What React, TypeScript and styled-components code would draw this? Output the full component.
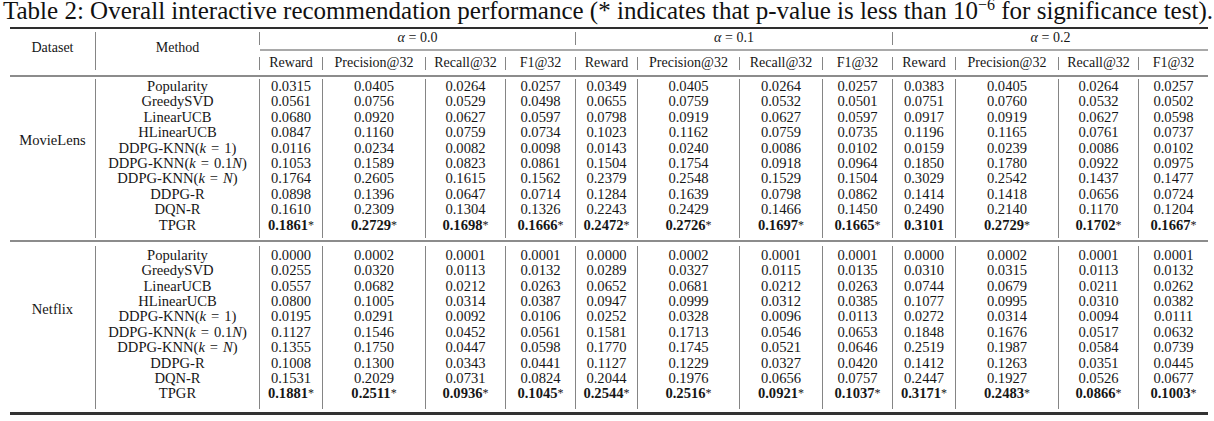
import React from "react";
import styled, { createGlobalStyle } from "styled-components";

const COLUMNS =
  "85px 164px 63px 103px 80px 70px 62px 102px 83px 70px 63px 103px 80px 70px";
const LINE = "#858585";
const ROW = 15.4;

const GlobalStyle = createGlobalStyle`
  body {
    margin: 0;
    background: #ffffff;
    color: #161616;
    font-family: "Liberation Serif", "Times New Roman", serif;
  }
`;

const Page = styled.div`
  width: 1214px;
  height: 421px;
  overflow: hidden;
`;

const Caption = styled.div`
  height: 21px;
  line-height: 21px;
  padding-left: 3px;
  font-size: 25px;
  white-space: nowrap;
  color: #111;
`;

const Sup = styled.sup`
  font-size: 16px;
  line-height: 0;
  vertical-align: 9px;
`;

const Table = styled.div`
  width: 1198px;
  margin: 6px 0 0 10px;
  font-size: 14px;
`;

const Rule = styled.div<{ $weight: number; $color: string; $gap: string }>`
  height: ${(p) => p.$weight}px;
  margin: ${(p) => p.$gap};
  background: ${(p) => p.$color};
`;

const Head = styled.div`
  display: grid;
  grid-template-columns: ${COLUMNS};
  grid-template-rows: 19px 3px 23px;
`;

const SpanHead = styled.div<{ $divider?: boolean }>`
  grid-row: 1 / 4;
  display: flex;
  align-items: center;
  justify-content: center;
  margin: 3px 0 4px;
  padding-bottom: 6px;
  border-left: ${(p) => (p.$divider ? `1px solid ${LINE}` : "none")};
`;

const GroupHead = styled.div`
  grid-row: 1;
  grid-column: span 4;
  display: flex;
  align-items: center;
  justify-content: center;
  margin: 3px 0;
  padding-bottom: 1px;
  border-left: 1px solid ${LINE};
`;

const CMidRule = styled.div`
  grid-row: 2;
  grid-column: 3 / 15;
  align-self: center;
  height: 2px;
  margin-left: 1px;
  background: #a9a9a9;
`;

const MetricHead = styled.div`
  grid-row: 3;
  display: flex;
  align-items: center;
  justify-content: center;
  margin: 6px 0 4px;
  padding-bottom: 1px;
  border-left: 1px solid ${LINE};
  white-space: nowrap;
`;

const Var = styled.i`
  font-style: italic;
`;

const Eq = styled.span`
  margin: 0 5px;
`;

const Body = styled.div<{ $padTop: number; $padBottom: number; $gap: string }>`
  --pad-top: ${(p) => p.$padTop}px;
  --pad-bottom: ${(p) => p.$padBottom}px;
  display: grid;
  grid-template-columns: ${COLUMNS};
  margin: ${(p) => p.$gap};
  font-size: 14.6px;
`;

const Column = styled.div<{ $divider?: boolean }>`
  display: flex;
  flex-direction: column;
  padding: var(--pad-top) 0 var(--pad-bottom);
  border-left: ${(p) => (p.$divider ? `1px solid ${LINE}` : "none")};
`;

const DatasetColumn = styled(Column)`
  align-items: center;
  padding-top: calc(var(--pad-top) + ${ROW * 3.5}px);
`;

const Cell = styled.div<{ $bold?: boolean }>`
  height: ${ROW}px;
  line-height: ${ROW}px;
  text-align: center;
  white-space: nowrap;
  font-weight: ${(p) => (p.$bold ? 700 : 400)};
`;

const Star = styled.span`
  font-weight: 400;
  font-size: 12px;
  vertical-align: 1px;
`;

const methods: React.ReactNode[] = [
  "Popularity",
  "GreedySVD",
  "LinearUCB",
  "HLinearUCB",
  <>DDPG-KNN(<Var>k</Var><Eq>=</Eq>1)</>,
  <>DDPG-KNN(<Var>k</Var><Eq>=</Eq>0.1<Var>N</Var>)</>,
  <>DDPG-KNN(<Var>k</Var><Eq>=</Eq><Var>N</Var>)</>,
  "DDPG-R",
  "DQN-R",
  "TPGR",
];

const alphas = ["0.0", "0.1", "0.2"];
const metrics = ["Reward", "Precision@32", "Recall@32", "F1@32"];

type Dataset = {
  name: string;
  padTop: number;
  padBottom: number;
  gap: string;
  rows: string[][];
};

const datasets: Dataset[] = [
  {
    name: "MovieLens",
    padTop: 0,
    padBottom: 5.5,
    gap: "2px 0",
    rows: [
      ["0.0315", "0.0405", "0.0264", "0.0257", "0.0349", "0.0405", "0.0264", "0.0257", "0.0383", "0.0405", "0.0264", "0.0257"],
      ["0.0561", "0.0756", "0.0529", "0.0498", "0.0655", "0.0759", "0.0532", "0.0501", "0.0751", "0.0760", "0.0532", "0.0502"],
      ["0.0680", "0.0920", "0.0627", "0.0597", "0.0798", "0.0919", "0.0627", "0.0597", "0.0917", "0.0919", "0.0627", "0.0598"],
      ["0.0847", "0.1160", "0.0759", "0.0734", "0.1023", "0.1162", "0.0759", "0.0735", "0.1196", "0.1165", "0.0761", "0.0737"],
      ["0.0116", "0.0234", "0.0082", "0.0098", "0.0143", "0.0240", "0.0086", "0.0102", "0.0159", "0.0239", "0.0086", "0.0102"],
      ["0.1053", "0.1589", "0.0823", "0.0861", "0.1504", "0.1754", "0.0918", "0.0964", "0.1850", "0.1780", "0.0922", "0.0975"],
      ["0.1764", "0.2605", "0.1615", "0.1562", "0.2379", "0.2548", "0.1529", "0.1504", "0.3029", "0.2542", "0.1437", "0.1477"],
      ["0.0898", "0.1396", "0.0647", "0.0714", "0.1284", "0.1639", "0.0798", "0.0862", "0.1414", "0.1418", "0.0656", "0.0724"],
      ["0.1610", "0.2309", "0.1304", "0.1326", "0.2243", "0.2429", "0.1466", "0.1450", "0.2490", "0.2140", "0.1170", "0.1204"],
      ["0.1861*", "0.2729*", "0.1698*", "0.1666*", "0.2472*", "0.2726*", "0.1697*", "0.1665*", "0.3101", "0.2729*", "0.1702*", "0.1667*"],
    ],
  },
  {
    name: "Netflix",
    padTop: 1.5,
    padBottom: 7.5,
    gap: "4px 0 3px",
    rows: [
      ["0.0000", "0.0002", "0.0001", "0.0001", "0.0000", "0.0002", "0.0001", "0.0001", "0.0000", "0.0002", "0.0001", "0.0001"],
      ["0.0255", "0.0320", "0.0113", "0.0132", "0.0289", "0.0327", "0.0115", "0.0135", "0.0310", "0.0315", "0.0113", "0.0132"],
      ["0.0557", "0.0682", "0.0212", "0.0263", "0.0652", "0.0681", "0.0212", "0.0263", "0.0744", "0.0679", "0.0211", "0.0262"],
      ["0.0800", "0.1005", "0.0314", "0.0387", "0.0947", "0.0999", "0.0312", "0.0385", "0.1077", "0.0995", "0.0310", "0.0382"],
      ["0.0195", "0.0291", "0.0092", "0.0106", "0.0252", "0.0328", "0.0096", "0.0113", "0.0272", "0.0314", "0.0094", "0.0111"],
      ["0.1127", "0.1546", "0.0452", "0.0561", "0.1581", "0.1713", "0.0546", "0.0653", "0.1848", "0.1676", "0.0517", "0.0632"],
      ["0.1355", "0.1750", "0.0447", "0.0598", "0.1770", "0.1745", "0.0521", "0.0646", "0.2519", "0.1987", "0.0584", "0.0739"],
      ["0.1008", "0.1300", "0.0343", "0.0441", "0.1127", "0.1229", "0.0327", "0.0420", "0.1412", "0.1263", "0.0351", "0.0445"],
      ["0.1531", "0.2029", "0.0731", "0.0824", "0.2044", "0.1976", "0.0656", "0.0757", "0.2447", "0.1927", "0.0526", "0.0677"],
      ["0.1881*", "0.2511*", "0.0936*", "0.1045*", "0.2544*", "0.2516*", "0.0921*", "0.1037*", "0.3171*", "0.2483*", "0.0866*", "0.1003*"],
    ],
  },
];

const Value = ({ value, best }: { value: string; best: boolean }) => {
  const starred = value.endsWith("*");
  return (
    <Cell $bold={best}>
      {starred ? value.slice(0, -1) : value}
      {starred && <Star>*</Star>}
    </Cell>
  );
};

const Section = ({ data }: { data: Dataset }) => (
  <Body $padTop={data.padTop} $padBottom={data.padBottom} $gap={data.gap}>
    <DatasetColumn>
      <Cell>{data.name}</Cell>
    </DatasetColumn>
    <Column $divider>
      {methods.map((m, i) => (
        <Cell key={i}>{m}</Cell>
      ))}
    </Column>
    {data.rows[0].map((_, c) => (
      <Column key={c} $divider>
        {data.rows.map((row, r) => (
          <Value key={r} value={row[c]} best={r === data.rows.length - 1} />
        ))}
      </Column>
    ))}
  </Body>
);

export default function App() {
  return (
    <Page>
      <GlobalStyle />
      <Caption>
        Table 2: Overall interactive recommendation performance (* indicates
        that p-value is less than 10<Sup>−6</Sup> for significance test).
      </Caption>
      <Table>
        <Rule $weight={2} $color="#2e2e2e" $gap="0" />
        <Head>
          <SpanHead>Dataset</SpanHead>
          <SpanHead $divider>Method</SpanHead>
          {alphas.map((a) => (
            <GroupHead key={a}>
              <span>
                <Var>α</Var> = {a}
              </span>
            </GroupHead>
          ))}
          <CMidRule />
          {alphas.map((a) =>
            metrics.map((m) => <MetricHead key={a + m}>{m}</MetricHead>)
          )}
        </Head>
        <Rule $weight={2} $color="#8c8c8c" $gap="1px 0 0" />
        <Section data={datasets[0]} />
        <Rule $weight={2} $color="#8c8c8c" $gap="0" />
        <Section data={datasets[1]} />
        <Rule $weight={2.5} $color="#333333" $gap="0" />
      </Table>
    </Page>
  );
}
